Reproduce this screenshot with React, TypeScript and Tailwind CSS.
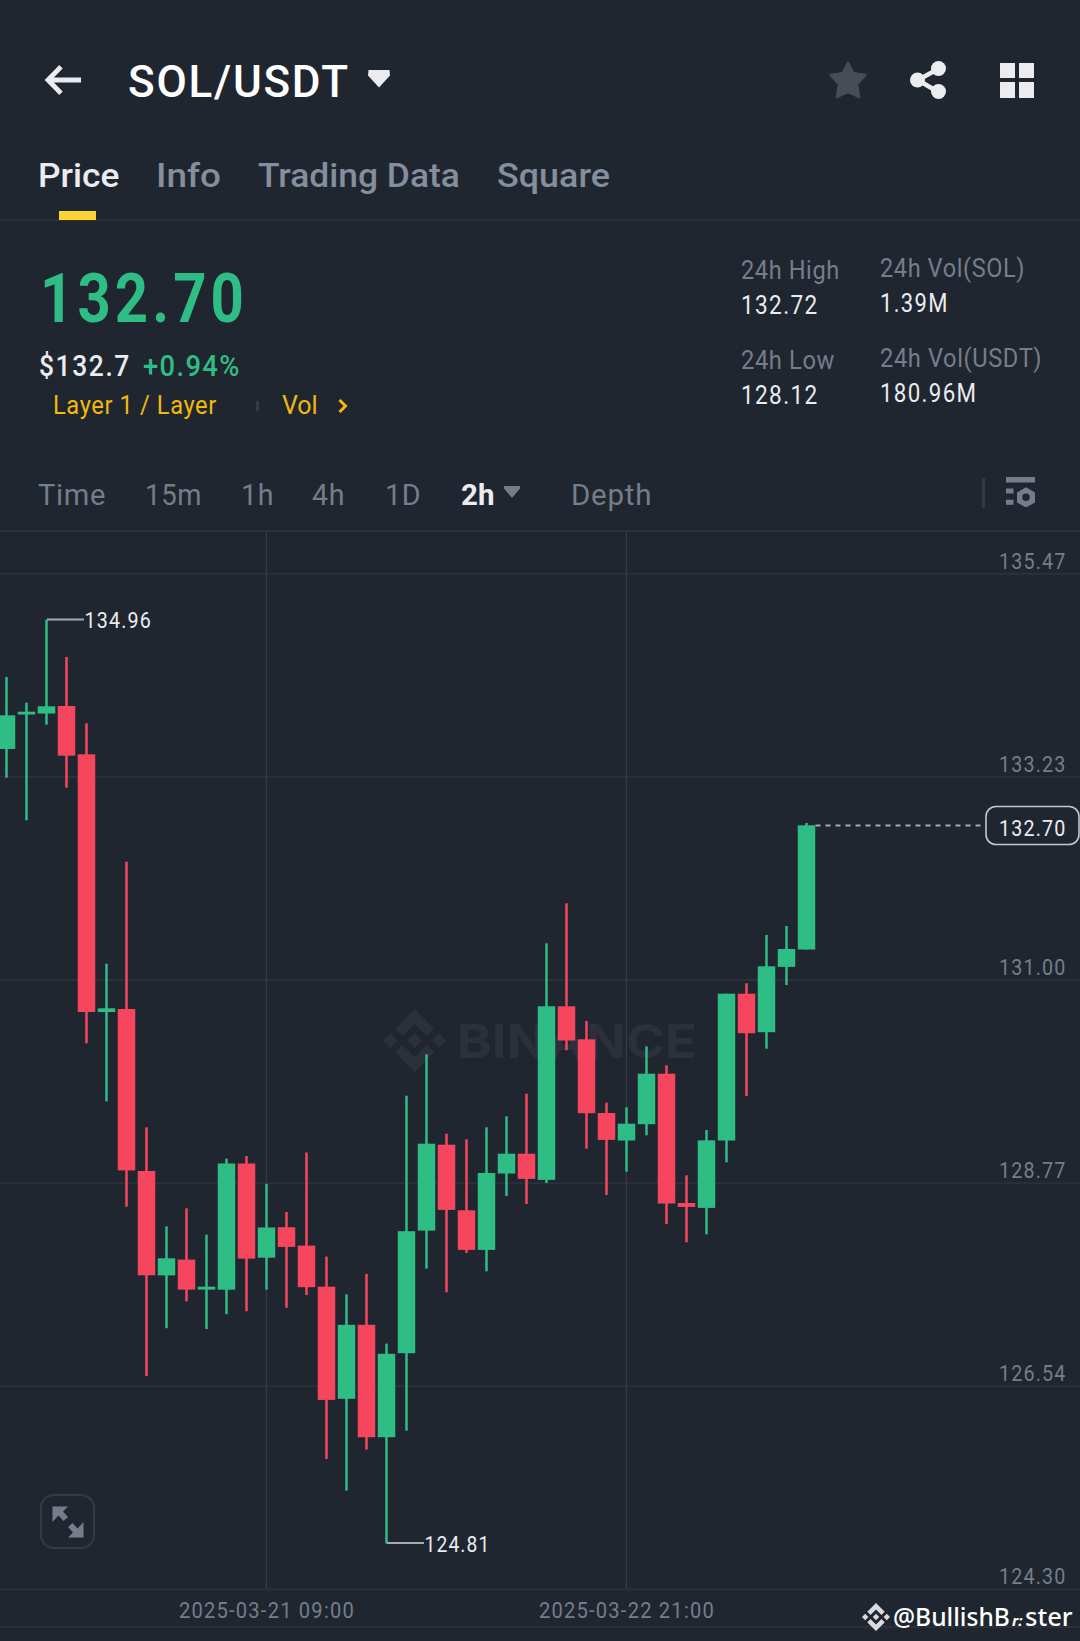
import React, { useLayoutEffect, useRef, useState } from 'react';

type Candle = {
  up: boolean;
  high: number;
  top: number;
  bottom: number;
  low: number;
};

const GREEN = '#2ebd85';
const RED = '#f6465d';
const GRID = '#2b303b';

const c = (up: boolean, high: number, top: number, bottom: number, low: number): Candle => ({
  up,
  high,
  top,
  bottom,
  low,
});

const candles: Candle[] = [
  c(true, 677, 715.3, 749, 777.7),
  c(true, 702.7, 711.7, 714.5, 820.3),
  c(true, 619.7, 706.3, 713.5, 724.7),
  c(false, 657, 706, 755.7, 787.7),
  c(false, 723.3, 754.3, 1012, 1043.3),
  c(true, 963.7, 1008.3, 1012, 1101.3),
  c(false, 861.7, 1009, 1170.4, 1206.8),
  c(false, 1127.3, 1171, 1275.3, 1376),
  c(true, 1226.4, 1258.3, 1275.4, 1328.2),
  c(false, 1208.3, 1259.6, 1289.6, 1301.4),
  c(true, 1234.7, 1286.7, 1289.6, 1329),
  c(true, 1158.6, 1163.5, 1289.7, 1314.2),
  c(false, 1156, 1163.5, 1258.6, 1311.2),
  c(true, 1183.8, 1227.5, 1257.7, 1289.7),
  c(false, 1212, 1227.2, 1246.9, 1307.8),
  c(false, 1152.5, 1245.6, 1287.2, 1295),
  c(false, 1256.6, 1286.7, 1399.9, 1459),
  c(true, 1294.3, 1324.8, 1398.8, 1490.6),
  c(false, 1273.9, 1324.8, 1437.2, 1449.6),
  c(true, 1343.6, 1353.8, 1437.2, 1543.5),
  c(true, 1095.7, 1231.2, 1353.2, 1430.7),
  c(true, 1054.3, 1143.7, 1230.6, 1268.7),
  c(false, 1133.7, 1144.7, 1209.9, 1292.3),
  c(false, 1139.3, 1210.3, 1249.9, 1253),
  c(true, 1127.3, 1173, 1249.9, 1271.3),
  c(true, 1116.3, 1153.7, 1173.5, 1196),
  c(false, 1093.7, 1153.7, 1178.9, 1204),
  c(true, 943.3, 1006.3, 1179.9, 1183),
  c(false, 903.3, 1006.3, 1040.5, 1050.3),
  c(false, 1021, 1039.3, 1113.2, 1148.7),
  c(false, 1102.7, 1113, 1139.9, 1195),
  c(true, 1107.3, 1123.7, 1140.5, 1171.7),
  c(true, 1046.3, 1073.7, 1124.2, 1135.3),
  c(false, 1065.3, 1073.7, 1203.5, 1224),
  c(false, 1175.3, 1203, 1206.9, 1242.3),
  c(true, 1130, 1140.3, 1207.9, 1234.3),
  c(true, 993.7, 993.7, 1140.5, 1162.3),
  c(false, 983.3, 993.7, 1033.2, 1096),
  c(true, 935, 966.3, 1032.2, 1048.7),
  c(true, 926, 949, 966.9, 985),
  c(true, 823, 825.3, 949.5, 949.5),
];

const priceLevels = [
  { label: '135.47', y: 573.7 },
  { label: '133.23', y: 776.8 },
  { label: '131.00', y: 980 },
  { label: '128.77', y: 1183.3 },
  { label: '126.54', y: 1386.3 },
  { label: '124.30', y: 1589.4 },
];

const timeMarks = [
  { label: '2025-03-21 09:00', x: 266.3 },
  { label: '2025-03-22 21:00', x: 626.3 },
];

// Squeezes or stretches a line of text to an exact width
function Fit({ w, className = '', children }: { w: number; className?: string; children: React.ReactNode }) {
  const ref = useRef<HTMLSpanElement>(null);
  const [scale, setScale] = useState(1);

  useLayoutEffect(() => {
    if (ref.current) setScale(w / ref.current.offsetWidth);
  }, [w]);

  return (
    <span className="block shrink-0" style={{ width: w }}>
      <span
        ref={ref}
        className={`block w-max origin-left whitespace-nowrap ${className}`}
        style={{ transform: `scaleX(${scale})` }}
      >
        {children}
      </span>
    </span>
  );
}

function BinanceLogo({ className, ...rest }: React.SVGProps<SVGSVGElement>) {
  return (
    <svg viewBox="0 0 64 64" fill="currentColor" className={className} {...rest}>
      <path d="M32 0 52 20 44.5 27.3 32 14.8 19.5 27.3 12 20Z" />
      <path d="M32 64 52 44 44.5 36.7 32 49.2 19.5 36.7 12 44Z" />
      <path d="M32 24.6 39.4 32 32 39.4 24.6 32Z" />
      <path d="M7.3 24.7 14.6 32 7.3 39.3 0 32Z" />
      <path d="M56.7 24.7 64 32 56.7 39.3 49.4 32Z" />
    </svg>
  );
}

function Header() {
  return (
    <header className="flex h-[161px] items-center pr-[46px] pb-px pl-[44px] text-[#eaecef]">
      <svg viewBox="0 0 38 30" className="h-[30px] w-[38px]" fill="none" stroke="currentColor" strokeWidth="4.8">
        <path d="M37 15H5M17 1.8 4 15 17 28.2" />
      </svg>
      <h1 className="mt-[3px] ml-[46px] text-white">
        <Fit w={222} className="text-[44px] leading-[60px] font-medium tracking-[0.04em]">SOL/USDT</Fit>
      </h1>
      <svg viewBox="0 0 24 18" className="mb-[2px] ml-[17px] h-[18px] w-6" fill="currentColor">
        <path d="M1.5 0h21l.5 5.500L12 17.500 1 5.500Z" />
      </svg>
      <div className="ml-auto flex items-center">
        <svg viewBox="0 0 38 38" className="h-[38px] w-[38px] text-[#474d57]" fill="currentColor">
          <path
            d="M19 1.500 24.600 12 37 13.600 28.400 23.500 30.500 36.500 19 31.500 7.500 36.500 9.600 23.500 1 13.600 13.400 12Z"
            stroke="currentColor"
            strokeWidth="1.800"
            strokeLinejoin="round"
          />
        </svg>
        <svg viewBox="0 0 38 38" className="mr-[53px] ml-[42px] h-[38px] w-[38px]" fill="currentColor">
          <path d="M9 19 29 8M9 19 29 31" stroke="currentColor" strokeWidth="4.500" />
          <circle cx="8.500" cy="19" r="7.500" />
          <circle cx="29.500" cy="7.500" r="7.500" />
          <circle cx="29.500" cy="30.500" r="7.500" />
        </svg>
        <div className="grid grid-cols-2 gap-1">
          <span className="h-[15.500px] w-[15px] bg-current" />
          <span className="h-[15.500px] w-[15px] bg-current" />
          <span className="h-[15.500px] w-[15px] bg-current" />
          <span className="h-[15.500px] w-[15px] bg-current" />
        </div>
      </div>
    </header>
  );
}

function Tabs() {
  return (
    <nav className="flex h-[60px] gap-[37px] border-b-2 border-[#2b303b] pl-[38px] text-[34px] leading-[28px] font-medium text-[#848e9c]">
      <div className="relative text-[#eaecef]">
        <Fit w={81}>Price</Fit>
        <span className="absolute top-[50px] left-[21px] h-[9px] w-[37px] bg-[#fcd535]" />
      </div>
      <Fit w={65}>Info</Fit>
      <Fit w={202}>Trading Data</Fit>
      <Fit w={113}>Square</Fit>
    </nav>
  );
}

function Stat({ label, lw, value, vw }: { label: string; lw: number; value: string; vw: number }) {
  return (
    <div className="leading-[35px]">
      <Fit w={lw} className="text-[25px] tracking-wide text-[#767d8a]">{label}</Fit>
      <Fit w={vw} className="text-[25.500px] tracking-[0.06em] text-[#eaecef]">{value}</Fit>
    </div>
  );
}

function Summary() {
  return (
    <section className="flex h-[238px] justify-between pr-[38px] pl-[39px]">
      <div className="pt-[48px]">
        <div className="pl-px">
          <Fit w={208} className="text-[69px] leading-[60px] font-bold tracking-[0.07em] text-[#2ebd85]">132.70</Fit>
        </div>
        <div className="mt-[17px] flex gap-[12px] text-[29px] leading-[40px] font-medium">
          <Fit w={92} className="tracking-[0.06em] text-[#eaecef]">$132.7</Fit>
          <Fit w={98} className="tracking-[0.05em] text-[#2ebd85]">+0.94%</Fit>
        </div>
        <div className="flex items-center pl-[14px] text-[25px] leading-[39px] text-[#f0b90b]">
          <Fit w={164} className="tracking-wide">Layer 1 / Layer</Fit>
          <span className="ml-[39px] h-[10px] w-[3px] bg-[#343a45]" />
          <span className="ml-[23px]"><Fit w={36}>Vol</Fit></span>
          <svg viewBox="0 0 10 14" className="ml-[20px] h-[14px] w-[10px]" fill="none" stroke="currentColor" strokeWidth="3">
            <path d="M1.500 1 7.500 7 1.500 13" />
          </svg>
        </div>
      </div>
      <div className="flex gap-[40px]">
        <div className="space-y-[20px] pt-[32px]">
          <Stat label="24h High" lw={99} value="132.72" vw={78} />
          <Stat label="24h Low" lw={94} value="128.12" vw={78} />
        </div>
        <div className="space-y-[20px] pt-[30px]">
          <Stat label="24h Vol(SOL)" lw={145} value="1.39M" vw={69} />
          <Stat label="24h Vol(USDT)" lw={162} value="180.96M" vw={97} />
        </div>
      </div>
    </section>
  );
}

function Intervals() {
  return (
    <div className="flex h-[73px] items-center border-b-2 border-[#2b303b] pr-[45px] pl-[38px] text-[29.500px] leading-[40px] text-[#767d8a]">
      <Fit w={68} className="tracking-wide">Time</Fit>
      <span className="ml-[39px]"><Fit w={57} className="tracking-wide">15m</Fit></span>
      <span className="ml-[39px]"><Fit w={33} className="tracking-wide">1h</Fit></span>
      <span className="ml-[38px]"><Fit w={33} className="tracking-wide">4h</Fit></span>
      <span className="ml-[40px]"><Fit w={36} className="tracking-wide">1D</Fit></span>
      <span className="ml-[40px] font-bold text-[#eaecef]"><Fit w={33}>2h</Fit></span>
      <svg viewBox="0 0 16 12" className="mb-[6px] ml-[10px] h-3 w-4" fill="currentColor">
        <path d="M0 0h16v2.500L8 12 0 2.500Z" />
      </svg>
      <span className="ml-[51px]"><Fit w={81} className="tracking-wide">Depth</Fit></span>
      <span className="mb-[4px] ml-auto h-[30px] w-[3px] bg-[#343a45]" />
      <svg viewBox="0 0 30 30" className="mb-[5px] ml-[20px] h-[30px] w-[30px]" fill="currentColor">
        <path d="M1 0h29v5.500H1ZM1 11.500h7.500v5H1ZM1 22.800h7.500v5H1Z" />
        <path
          fillRule="evenodd"
          d="M21 10.300 30 15.400v10L21 30.500 12 25.400v-10ZM21 16.500a3.800 3.800 0 1 0 0 7.600 3.800 3.800 0 0 0 0-7.600Z"
        />
      </svg>
    </div>
  );
}

function Chart() {
  return (
    <svg viewBox="0 532 1080 1109" className="block h-[1109px] w-[1080px] font-[Roboto,sans-serif]">
      {priceLevels.map((p) => (
        <rect key={p.label} x="0" y={p.y - 1} width="1080" height="2" fill={GRID} />
      ))}
      <rect x="0" y="1625.800" width="1080" height="2" fill={GRID} />
      {timeMarks.map((t) => (
        <rect key={t.label} x={t.x - 0.5} y="532" width="1.200" height="1057" fill="#363c48" />
      ))}

      <BinanceLogo x="383.500" y="1009" width="62.500" height="63" className="text-[#2b303b]" />
      <text x="457" y="1057.500" textLength="240" lengthAdjust="spacingAndGlyphs" className="fill-[#2b303b] font-[Inter,sans-serif] text-[47px] font-bold">
        BINANCE
      </text>

      {candles.map((k, i) => {
        const x = 6.5 + i * 20;
        return (
          <g key={i} fill={k.up ? GREEN : RED}>
            <rect x={x - 1.25} y={k.high} width="2.500" height={k.low - k.high} />
            <rect x={x - 8.75} y={k.top} width="17.500" height={k.bottom - k.top} />
          </g>
        );
      })}

      <path d="M47 619.500H84M387 1543H424" stroke="#a5abb5" strokeWidth="1.800" />
      <g className="fill-[#eaecef] text-[22.500px] tracking-[0.06em]">
        <text x="84.500" y="628.300" textLength="67.500" lengthAdjust="spacingAndGlyphs">134.96</text>
        <text x="424.500" y="1552" textLength="66" lengthAdjust="spacingAndGlyphs">124.81</text>
      </g>

      <g className="fill-[#767d8a] text-[22.500px] tracking-[0.06em]">
        {priceLevels.map((p) => (
          <text key={p.label} x="999" y={p.y - 5.2} textLength="67.500" lengthAdjust="spacingAndGlyphs">
            {p.label}
          </text>
        ))}
        {timeMarks.map((t) => (
          <text key={t.label} x={t.x - 87.3} y="1617.500" textLength="176" lengthAdjust="spacingAndGlyphs">
            {t.label}
          </text>
        ))}
      </g>

      <path d="M815.500 825.600H981" stroke="#a5abb5" strokeWidth="2" strokeDasharray="5 5" />
      <rect x="986" y="806.500" width="93" height="38" rx="10" fill="#202630" stroke="#c3c7cd" strokeWidth="1.600" />
      <text
        x="999"
        y="836.300"
        textLength="67.500"
        lengthAdjust="spacingAndGlyphs"
        className="fill-[#eaecef] text-[22.500px] tracking-[0.06em]"
      >
        132.70
      </text>
    </svg>
  );
}

export default function App() {
  return (
    <div className="relative h-[1641px] w-[1080px] overflow-hidden bg-[#202630] font-[Roboto,sans-serif]">
      <Header />
      <Tabs />
      <Summary />
      <Intervals />
      <Chart />

      <button className="absolute top-[1494px] left-[40px] flex h-[55px] w-[55px] items-center justify-center rounded-[14px] border-2 border-[#343a45] text-[#767d8a]">
        <svg viewBox="0 0 32 32" className="h-8 w-8" fill="currentColor">
          <path d="M0.500 0.500h15.500L11 5.500l5 5.500-4.500 4-5-5.500-6 6.500Z" />
          <path d="M31.500 31.500H16l5-5-5-5.500 4.500-4 5 5.500 6-6.500Z" />
        </svg>
      </button>

      <div className="absolute top-[1599px] right-[7px] flex items-start gap-[3px] font-['Noto_Sans',sans-serif] text-[25px] leading-[34px] font-medium text-white">
        <BinanceLogo className="mt-1 h-7 w-7 text-[#d9dbde]" />
        <span className="flex">
          <Fit w={117}>@BullishB</Fit>
          <span className="w-[15px] pl-[2px] text-[15px] leading-[42px] font-bold italic">r:</span>
          <Fit w={48}>ster</Fit>
        </span>
      </div>
    </div>
  );
}
